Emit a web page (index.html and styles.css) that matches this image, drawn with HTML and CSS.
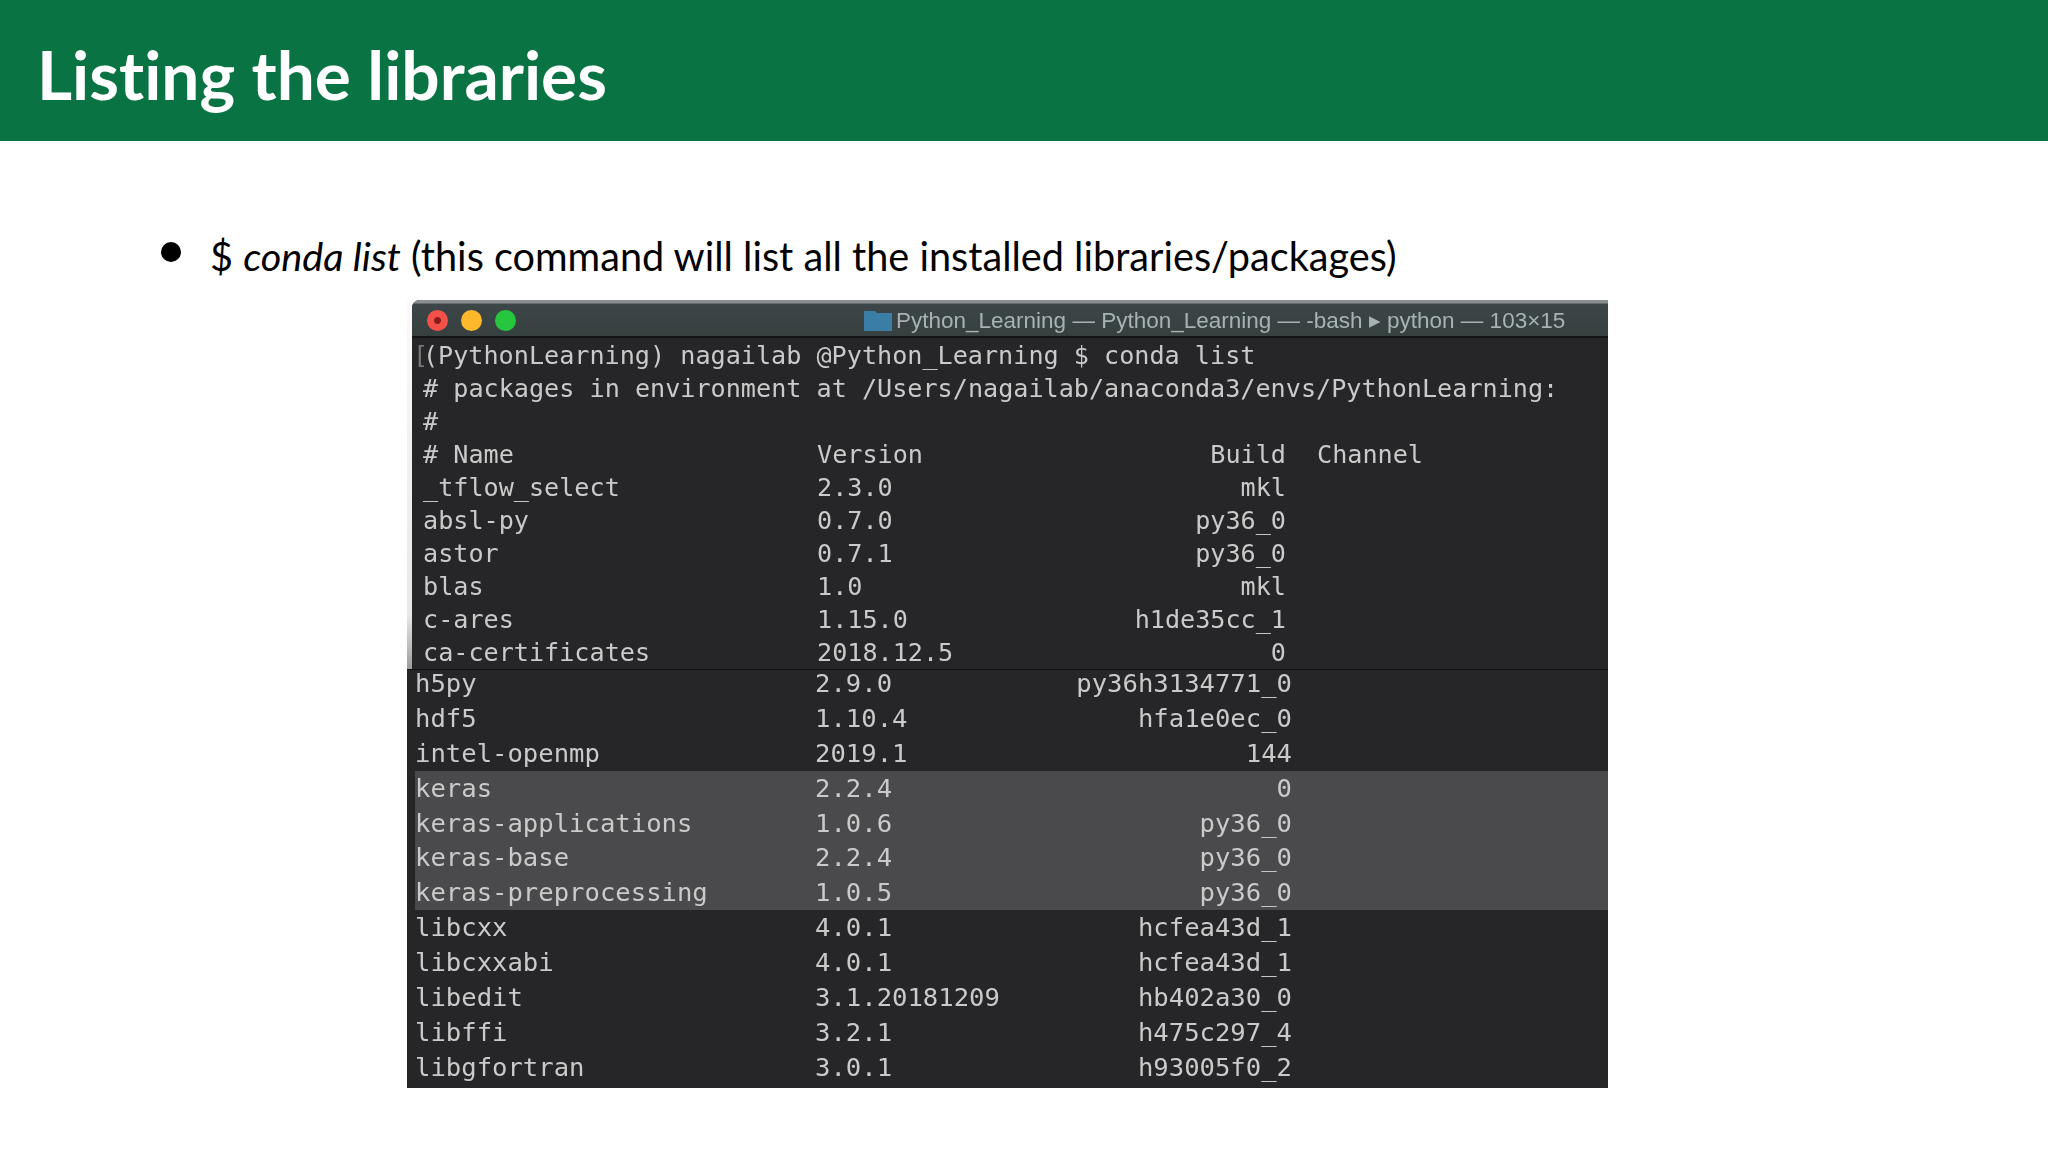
FILE: index.html
```html
<!DOCTYPE html>
<html lang="en">
<head>
<meta charset="utf-8">
<title>Listing the libraries</title>
<link rel="stylesheet" href="styles.css">
</head>
<body>
<header class="banner"><h1 class="banner-title">Listing the libraries</h1></header>
<main class="slide">
  <ul class="points">
    <li class="point"><span class="dot"></span><p class="point-text">$ <em>conda list</em> (this command will list all the installed libraries/packages)</p></li>
  </ul>
  <figure class="terminal">
    <section class="pane-top">
      <div class="titlebar">
        <span class="light red"></span><span class="light yellow"></span><span class="light green"></span>
        <svg class="folder" viewBox="0 0 28 21"><path d="M0 1h11l2 2h15v18H0z" fill="#3a7ea6"/></svg>
        <span class="window-title">Python_Learning — Python_Learning — -bash ▸ python — 103×15</span>
      </div>
      <div class="rows rows-top">
        <div class="line"><span class="bracket">[</span>(PythonLearning) nagailab @Python_Learning $ conda list</div>
        <div class="line"># packages in environment at /Users/nagailab/anaconda3/envs/PythonLearning:</div>
        <div class="line">#</div>
        <div class="row"><span># Name</span><span>Version</span><span class="build">Build</span><span>Channel</span></div>
        <div class="row"><span>_tflow_select</span><span>2.3.0</span><span class="build">mkl</span></div>
        <div class="row"><span>absl-py</span><span>0.7.0</span><span class="build">py36_0</span></div>
        <div class="row"><span>astor</span><span>0.7.1</span><span class="build">py36_0</span></div>
        <div class="row"><span>blas</span><span>1.0</span><span class="build">mkl</span></div>
        <div class="row"><span>c-ares</span><span>1.15.0</span><span class="build">h1de35cc_1</span></div>
        <div class="row"><span>ca-certificates</span><span>2018.12.5</span><span class="build">0</span></div>
      </div>
    </section>
    <section class="pane-bottom">
      <div class="row"><span>h5py</span><span>2.9.0</span><span class="build">py36h3134771_0</span></div>
      <div class="row"><span>hdf5</span><span>1.10.4</span><span class="build">hfa1e0ec_0</span></div>
      <div class="row"><span>intel-openmp</span><span>2019.1</span><span class="build">144</span></div>
      <div class="row hl"><span>keras</span><span>2.2.4</span><span class="build">0</span></div>
      <div class="row hl"><span>keras-applications</span><span>1.0.6</span><span class="build">py36_0</span></div>
      <div class="row hl"><span>keras-base</span><span>2.2.4</span><span class="build">py36_0</span></div>
      <div class="row hl"><span>keras-preprocessing</span><span>1.0.5</span><span class="build">py36_0</span></div>
      <div class="row"><span>libcxx</span><span>4.0.1</span><span class="build">hcfea43d_1</span></div>
      <div class="row"><span>libcxxabi</span><span>4.0.1</span><span class="build">hcfea43d_1</span></div>
      <div class="row"><span>libedit</span><span>3.1.20181209</span><span class="build">hb402a30_0</span></div>
      <div class="row"><span>libffi</span><span>3.2.1</span><span class="build">h475c297_4</span></div>
      <div class="row"><span>libgfortran</span><span>3.0.1</span><span class="build">h93005f0_2</span></div>
    </section>
  </figure>
</main>
</body>
</html>
```
FILE: styles.css
```css
html, body { margin: 0; padding: 0; background: #fff; }
body { height: 1152px; overflow: hidden; font-family: "Lato", "Liberation Sans", sans-serif; color: #000; font-variant-ligatures: none; }

.banner { height: 141px; background: #0a7344; display: flex; align-items: center; padding: 7px 0 0 37px; box-sizing: border-box; }
.banner-title { margin: 0; color: #fff; font-size: 67.6px; font-weight: 700; line-height: 1; }

.slide { display: flex; flex-direction: column; padding-top: 89px; }
.points { list-style: none; margin: 0; padding: 0 0 0 161px; }
.point { display: flex; align-items: flex-start; height: 70px; }
.dot { width: 20px; height: 20px; border-radius: 50%; background: #000; margin-top: 12px; }
.point-text { margin: -1px 0 0 29px; font-size: 39.65px; line-height: 54px; }
.point-text em { font-style: italic; }

.terminal { margin: 0 0 0 407px; width: 1201px; height: 788px; display: flex; flex-direction: column; background: linear-gradient(#fafafa 0, #e8e8e8 40%, #9a9a9a 47%); color: #cacaca; font-family: "DejaVu Sans Mono", monospace; filter: blur(0.5px); overflow: hidden; }

.pane-top { height: 369px; flex: none; margin-left: 5px; display: flex; flex-direction: column; overflow: hidden; border-radius: 8px 0 0 0; background: #262628; }
.pane-bottom { flex: 1; padding-left: 8px; border-top: 1px solid #121214; font-size: 25.6px; background: #262628; overflow: hidden; }

.titlebar { height: 38px; flex: none; box-sizing: border-box; display: flex; align-items: center; padding: 4px 0 0 15px; gap: 13px; background: linear-gradient(#8a8e8e 0, #8a8e8e 3px, #3c4648 4px, #36403f 100%); border-bottom: 2px solid #141416; }
.light { width: 21px; height: 21px; border-radius: 50%; }
.red { background: radial-gradient(circle, #8c1b1b 0 3px, #f4504a 4px); }
.yellow { background: #fdb92b; }
.green { background: #27c63f; }
.folder { width: 28px; height: 21px; margin-left: 335px; }
.window-title { margin-left: -9px; font: 22.5px "Liberation Sans", sans-serif; color: #a8b2b4; white-space: nowrap; }

.rows-top { padding: 1px 0 0 11px; font-size: 25.15px; }
.line { height: 33px; line-height: 33px; white-space: pre; }
.bracket { margin-left: -10px; letter-spacing: -5.2px; color: #777; }
.row { display: grid; height: 34.9px; line-height: 34.9px; white-space: pre; }
.rows-top .row { height: 33px; line-height: 33px; grid-template-columns: 394px 240px 229px 31px auto; }
.rows-top .row span:nth-child(4) { grid-column: 5; }
.pane-bottom .row { grid-template-columns: 400px 240px 237px; }
.pane-bottom .row:first-child { margin-top: -4px; }
.build { text-align: right; grid-column: 3; }
.hl { background: #4a4a4c; }
```
